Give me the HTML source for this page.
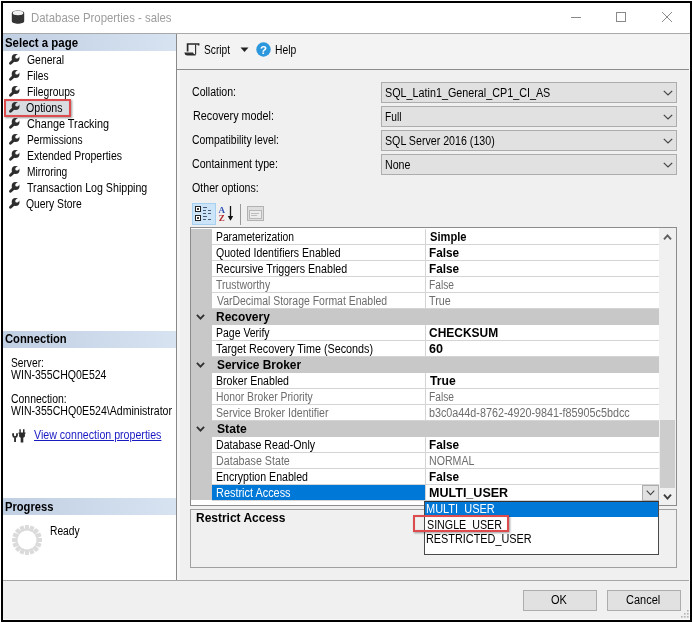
<!DOCTYPE html>
<html><head><meta charset="utf-8"><title>Database Properties - sales</title>
<style>
html,body{margin:0;padding:0;}
body{width:692px;height:622px;background:#fff;position:relative;overflow:hidden;font-family:"Liberation Sans",sans-serif;font-size:12px;color:#000;}
.abs,.t,div,svg{position:absolute;}
.t{white-space:nowrap;line-height:16px;transform-origin:0 50%;display:block;}
.b{font-weight:bold;}
.g{color:#6d6d6d;}
#frame{left:1px;top:1px;width:687px;height:617px;border:2px solid #000;background:#f0f0f0;}
#title{left:3px;top:3px;width:687px;height:30px;background:#fff;border-bottom:1px solid #a9a9a9;}
#left{left:3px;top:34px;width:173px;height:546px;background:#fff;border-right:1px solid #8a8a8a;}
.hdr{left:3px;width:173px;height:17px;background:linear-gradient(90deg,#c1cfe3 0%,#ccd9ea 50%,#d7e3f1 100%);}
.combo{left:381px;width:294px;height:19px;border:1px solid #adadad;background:#e1e1e1;}
.btn{top:590px;width:72px;height:19px;border:1px solid #adadad;background:#e1e1e1;}
.row{left:212px;width:447px;height:15px;border-bottom:1px solid #d4d4d4;background:#fff;}
.cat{left:191px;width:468px;height:16px;background:#c8c8c8;}
#root{left:0;top:0;width:692px;height:622px;will-change:transform;}
</style></head><body>
<div id="root">
<div id="frame"></div>
<div id="title"></div>

<svg style="left:11px;top:9px" width="14" height="16" viewBox="0 0 14 16"><path d="M0.8 4 C0.8 0.6 13.2 0.6 13.2 4 V12 C13.2 15.6 0.8 15.6 0.8 12 Z" fill="#343434"/><ellipse cx="7" cy="4" rx="5.3" ry="2.2" fill="#f2f2f2"/></svg>
<span class="t " style="left:30.91px;top:10.16px;font-size:12.8px;transform:scaleX(0.8901);color:#9d9d9d;">Database Properties - sales</span>
<svg style="left:566px;top:8px" width="112" height="20" viewBox="0 0 112 20" fill="none" stroke="#8a8a8a" stroke-width="1"><path d="M5 9.5 H15"/><rect x="50.5" y="4.5" width="9" height="9"/><path d="M96 4 L106 14 M106 4 L96 14"/></svg>
<div id="left"></div>
<div class="hdr" style="top:34px"></div>
<span class="t b" style="left:5.04px;top:34.57px;font-size:12.5px;transform:scaleX(0.9139);">Select a page</span>
<svg style="left:8.4px;top:53.6px" width="13" height="12" viewBox="0 0 13 12"><path d="M2.5 9.2 L6.6 5.4" stroke="#2e2e2e" stroke-width="2.9" stroke-linecap="round" fill="none"/><circle cx="7.6" cy="4" r="3.9" fill="#2e2e2e"/><circle cx="8.9" cy="2.9" r="1.7" fill="#fff"/><path d="M8.9 2.9 L13 -0.6" stroke="#fff" stroke-width="3" fill="none"/></svg>
<span class="t " style="left:26.67px;top:52.14px;font-size:12px;transform:scaleX(0.8675);">General</span>
<svg style="left:8.4px;top:69.6px" width="13" height="12" viewBox="0 0 13 12"><path d="M2.5 9.2 L6.6 5.4" stroke="#2e2e2e" stroke-width="2.9" stroke-linecap="round" fill="none"/><circle cx="7.6" cy="4" r="3.9" fill="#2e2e2e"/><circle cx="8.9" cy="2.9" r="1.7" fill="#fff"/><path d="M8.9 2.9 L13 -0.6" stroke="#fff" stroke-width="3" fill="none"/></svg>
<span class="t " style="left:26.65px;top:68.14px;font-size:12px;transform:scaleX(0.85);">Files</span>
<svg style="left:8.4px;top:85.6px" width="13" height="12" viewBox="0 0 13 12"><path d="M2.5 9.2 L6.6 5.4" stroke="#2e2e2e" stroke-width="2.9" stroke-linecap="round" fill="none"/><circle cx="7.6" cy="4" r="3.9" fill="#2e2e2e"/><circle cx="8.9" cy="2.9" r="1.7" fill="#fff"/><path d="M8.9 2.9 L13 -0.6" stroke="#fff" stroke-width="3" fill="none"/></svg>
<span class="t " style="left:26.64px;top:84.14px;font-size:12px;transform:scaleX(0.8569);">Filegroups</span>
<div style="left:6px;top:101px;width:63px;height:14px;background:#d9dde2;"></div>
<svg style="left:8.4px;top:101.6px" width="13" height="12" viewBox="0 0 13 12"><path d="M2.5 9.2 L6.6 5.4" stroke="#2e2e2e" stroke-width="2.9" stroke-linecap="round" fill="none"/><circle cx="7.6" cy="4" r="3.9" fill="#2e2e2e"/><circle cx="8.9" cy="2.9" r="1.7" fill="#d9dde2"/><path d="M8.9 2.9 L13 -0.6" stroke="#d9dde2" stroke-width="3" fill="none"/></svg>
<span class="t " style="left:26.26px;top:100.14px;font-size:12px;transform:scaleX(0.884);">Options</span>
<svg style="left:8.4px;top:117.6px" width="13" height="12" viewBox="0 0 13 12"><path d="M2.5 9.2 L6.6 5.4" stroke="#2e2e2e" stroke-width="2.9" stroke-linecap="round" fill="none"/><circle cx="7.6" cy="4" r="3.9" fill="#2e2e2e"/><circle cx="8.9" cy="2.9" r="1.7" fill="#fff"/><path d="M8.9 2.9 L13 -0.6" stroke="#fff" stroke-width="3" fill="none"/></svg>
<span class="t " style="left:26.65px;top:116.14px;font-size:12px;transform:scaleX(0.9039);">Change Tracking</span>
<svg style="left:8.4px;top:133.6px" width="13" height="12" viewBox="0 0 13 12"><path d="M2.5 9.2 L6.6 5.4" stroke="#2e2e2e" stroke-width="2.9" stroke-linecap="round" fill="none"/><circle cx="7.6" cy="4" r="3.9" fill="#2e2e2e"/><circle cx="8.9" cy="2.9" r="1.7" fill="#fff"/><path d="M8.9 2.9 L13 -0.6" stroke="#fff" stroke-width="3" fill="none"/></svg>
<span class="t " style="left:26.65px;top:132.14px;font-size:12px;transform:scaleX(0.85);">Permissions</span>
<svg style="left:8.4px;top:149.6px" width="13" height="12" viewBox="0 0 13 12"><path d="M2.5 9.2 L6.6 5.4" stroke="#2e2e2e" stroke-width="2.9" stroke-linecap="round" fill="none"/><circle cx="7.6" cy="4" r="3.9" fill="#2e2e2e"/><circle cx="8.9" cy="2.9" r="1.7" fill="#fff"/><path d="M8.9 2.9 L13 -0.6" stroke="#fff" stroke-width="3" fill="none"/></svg>
<span class="t " style="left:26.63px;top:148.14px;font-size:12px;transform:scaleX(0.8737);">Extended Properties</span>
<svg style="left:8.4px;top:165.6px" width="13" height="12" viewBox="0 0 13 12"><path d="M2.5 9.2 L6.6 5.4" stroke="#2e2e2e" stroke-width="2.9" stroke-linecap="round" fill="none"/><circle cx="7.6" cy="4" r="3.9" fill="#2e2e2e"/><circle cx="8.9" cy="2.9" r="1.7" fill="#fff"/><path d="M8.9 2.9 L13 -0.6" stroke="#fff" stroke-width="3" fill="none"/></svg>
<span class="t " style="left:26.65px;top:164.14px;font-size:12px;transform:scaleX(0.85);">Mirroring</span>
<svg style="left:8.4px;top:181.6px" width="13" height="12" viewBox="0 0 13 12"><path d="M2.5 9.2 L6.6 5.4" stroke="#2e2e2e" stroke-width="2.9" stroke-linecap="round" fill="none"/><circle cx="7.6" cy="4" r="3.9" fill="#2e2e2e"/><circle cx="8.9" cy="2.9" r="1.7" fill="#fff"/><path d="M8.9 2.9 L13 -0.6" stroke="#fff" stroke-width="3" fill="none"/></svg>
<span class="t " style="left:27.28px;top:180.14px;font-size:12px;transform:scaleX(0.8868);">Transaction Log Shipping</span>
<svg style="left:8.4px;top:197.6px" width="13" height="12" viewBox="0 0 13 12"><path d="M2.5 9.2 L6.6 5.4" stroke="#2e2e2e" stroke-width="2.9" stroke-linecap="round" fill="none"/><circle cx="7.6" cy="4" r="3.9" fill="#2e2e2e"/><circle cx="8.9" cy="2.9" r="1.7" fill="#fff"/><path d="M8.9 2.9 L13 -0.6" stroke="#fff" stroke-width="3" fill="none"/></svg>
<span class="t " style="left:26.27px;top:196.14px;font-size:12px;transform:scaleX(0.8627);">Query Store</span>
<div style="left:4px;top:99px;width:63px;height:14px;border:2px solid #dd4b4e;box-shadow:1px 1px 2px rgba(0,0,0,.4), inset 0 0 1px rgba(120,0,0,.3);"></div>
<div class="hdr" style="top:331px"></div>
<span class="t b" style="left:5.25px;top:330.87px;font-size:12.5px;transform:scaleX(0.8978);">Connection</span>
<span class="t " style="left:11.17px;top:354.84px;font-size:12px;transform:scaleX(0.85);">Server:</span>
<span class="t " style="left:11.4px;top:367.44px;font-size:12px;transform:scaleX(0.8783);">WIN-355CHQ0E524</span>
<span class="t " style="left:11.17px;top:390.84px;font-size:12px;transform:scaleX(0.8688);">Connection:</span>
<span class="t " style="left:11.4px;top:403.34px;font-size:12px;transform:scaleX(0.8811);">WIN-355CHQ0E524\Administrator</span>
<svg style="left:12px;top:429px" width="14" height="14" viewBox="0 0 14 14"><path d="M1.1 4.2 V6.2 C1.1 7.6 2 8 3.05 8.2 V13 M5 4.2 V6.2 C5 7.6 4.1 8 3.05 8.2" stroke="#2a2a2a" stroke-width="1.8" fill="none"/><path d="M7.3 0.2 h1.5 v3.4 h2.2 v-3.4 h1.5 v3.4 h1 v1.2 h-0.6 v2.2 c0 0.9 -0.7 1.5 -1.6 1.5 v4.9 h-2.6 v-4.9 c-0.9 0 -1.6 -0.6 -1.6 -1.5 v-2.2 h-0.6 v-1.2 h1 z" fill="#2a2a2a"/></svg>
<span class="t " style="left:34.2px;top:427.14px;font-size:12px;transform:scaleX(0.8857);color:#1a1ac4;text-decoration:underline;">View connection properties</span>
<div class="hdr" style="top:498px"></div>
<span class="t b" style="left:5.03px;top:498.87px;font-size:12.5px;transform:scaleX(0.8925);">Progress</span>
<svg style="left:10.8px;top:524.1px" width="32" height="32" viewBox="-16 -16 32 32" fill="#dbdbdb"><rect x="-2.1" y="-15" width="4.2" height="5.7" rx="0.8" transform="rotate(0.0)"/><rect x="-2.1" y="-15" width="4.2" height="5.7" rx="0.8" transform="rotate(22.5)"/><rect x="-2.1" y="-15" width="4.2" height="5.7" rx="0.8" transform="rotate(45.0)"/><rect x="-2.1" y="-15" width="4.2" height="5.7" rx="0.8" transform="rotate(67.5)"/><rect x="-2.1" y="-15" width="4.2" height="5.7" rx="0.8" transform="rotate(90.0)"/><rect x="-2.1" y="-15" width="4.2" height="5.7" rx="0.8" transform="rotate(112.5)"/><rect x="-2.1" y="-15" width="4.2" height="5.7" rx="0.8" transform="rotate(135.0)"/><rect x="-2.1" y="-15" width="4.2" height="5.7" rx="0.8" transform="rotate(157.5)"/><rect x="-2.1" y="-15" width="4.2" height="5.7" rx="0.8" transform="rotate(180.0)"/><rect x="-2.1" y="-15" width="4.2" height="5.7" rx="0.8" transform="rotate(202.5)"/><rect x="-2.1" y="-15" width="4.2" height="5.7" rx="0.8" transform="rotate(225.0)"/><rect x="-2.1" y="-15" width="4.2" height="5.7" rx="0.8" transform="rotate(247.5)"/><rect x="-2.1" y="-15" width="4.2" height="5.7" rx="0.8" transform="rotate(270.0)"/><rect x="-2.1" y="-15" width="4.2" height="5.7" rx="0.8" transform="rotate(292.5)"/><rect x="-2.1" y="-15" width="4.2" height="5.7" rx="0.8" transform="rotate(315.0)"/><rect x="-2.1" y="-15" width="4.2" height="5.7" rx="0.8" transform="rotate(337.5)"/></svg>
<span class="t " style="left:49.95px;top:522.54px;font-size:12px;transform:scaleX(0.8533);">Ready</span>
<div style="left:177px;top:34px;width:3px;height:546px;background:#f6f6f6;"></div>
<div style="left:177px;top:34px;width:513px;height:35px;background:#f3f3f3;"></div>
<div style="left:177px;top:69px;width:513px;height:1px;background:#8c8c8c;"></div>
<svg style="left:184px;top:42px" width="16" height="15" viewBox="0 0 16 15" fill="none" stroke="#2a2a2a"><path d="M3.6 9.6 V2 H14.6 V3.6" stroke-width="1.7"/><path d="M11.6 2.4 V12.6" stroke-width="1.1"/><path d="M1.2 11.2 H8.6 C8.9 12.4 9.6 13 11.6 12.9 H3.4 C2 12.9 1.4 12.2 1.2 11.2 Z" stroke-width="1.3" fill="#2a2a2a"/></svg>
<span class="t " style="left:204.38px;top:42.14px;font-size:12px;transform:scaleX(0.85);">Script</span>
<svg style="left:240px;top:47px" width="9" height="6" viewBox="0 0 9 6"><path d="M0.5 0.5 H8.5 L4.5 5 Z" fill="#222"/></svg>
<svg style="left:255.7px;top:42.4px" width="15" height="15" viewBox="0 0 15 15"><circle cx="7.5" cy="7.5" r="7.2" fill="#2b97dc"/><text x="7.5" y="11.6" font-family="Liberation Sans, sans-serif" font-weight="bold" font-size="11.5" fill="#fff" text-anchor="middle">?</text></svg>
<span class="t " style="left:274.94px;top:42.14px;font-size:12px;transform:scaleX(0.8602);">Help</span>
<span class="t " style="left:192.46px;top:84.34px;font-size:12px;transform:scaleX(0.8804);">Collation:</span>
<div class="combo" style="top:82px"></div>
<span class="t " style="left:385.05px;top:84.64px;font-size:12px;transform:scaleX(0.8977);">SQL_Latin1_General_CP1_CI_AS</span>
<svg style="left:663px;top:90px" width="10" height="6" viewBox="0 0 10 6" fill="none" stroke="#444" stroke-width="1.2"><path d="M0.8 0.8 L5 5 L9.2 0.8"/></svg>
<span class="t " style="left:192.6px;top:108.34px;font-size:12px;transform:scaleX(0.8989);">Recovery model:</span>
<div class="combo" style="top:106px"></div>
<span class="t " style="left:384.95px;top:108.64px;font-size:12px;transform:scaleX(0.85);">Full</span>
<svg style="left:663px;top:114px" width="10" height="6" viewBox="0 0 10 6" fill="none" stroke="#444" stroke-width="1.2"><path d="M0.8 0.8 L5 5 L9.2 0.8"/></svg>
<span class="t " style="left:192.47px;top:132.34px;font-size:12px;transform:scaleX(0.869);">Compatibility level:</span>
<div class="combo" style="top:130px"></div>
<span class="t " style="left:385.06px;top:132.64px;font-size:12px;transform:scaleX(0.8873);">SQL Server 2016 (130)</span>
<svg style="left:663px;top:138px" width="10" height="6" viewBox="0 0 10 6" fill="none" stroke="#444" stroke-width="1.2"><path d="M0.8 0.8 L5 5 L9.2 0.8"/></svg>
<span class="t " style="left:192.46px;top:156.34px;font-size:12px;transform:scaleX(0.8825);">Containment type:</span>
<div class="combo" style="top:154px"></div>
<span class="t " style="left:384.91px;top:156.64px;font-size:12px;transform:scaleX(0.8881);">None</span>
<svg style="left:663px;top:162px" width="10" height="6" viewBox="0 0 10 6" fill="none" stroke="#444" stroke-width="1.2"><path d="M0.8 0.8 L5 5 L9.2 0.8"/></svg>
<span class="t " style="left:192.46px;top:180.34px;font-size:12px;transform:scaleX(0.8854);">Other options:</span>
<div style="left:192px;top:203px;width:22px;height:20px;background:#cce4f7;border:1px solid #a6d0f2;"></div>
<svg style="left:195px;top:206px" width="18" height="16" viewBox="0 0 18 16"><g fill="#fff" stroke="#222" stroke-width="1"><rect x="0.5" y="0.5" width="5" height="5"/><rect x="0.5" y="9.5" width="5" height="5"/></g><path d="M2 3 H4 M3 2 V4 M2 12 H4 M3 11 V13" stroke="#000" stroke-width="1"/><g stroke="#4a5a78" stroke-width="1"><path d="M8 1.5 H12 M8 4.5 H11 M13 4.5 H16 M8 7.5 H11 M13 7.5 H16"/><path d="M8 10.5 H12 M8 13.5 H11 M13 13.5 H16"/></g></svg>
<svg style="left:218px;top:204px" width="18" height="20" viewBox="0 0 18 20"><text x="0.5" y="8.5" font-family="Liberation Serif, serif" font-weight="bold" font-size="9" fill="#2b4fb3">A</text><text x="0.8" y="17" font-family="Liberation Serif, serif" font-weight="bold" font-size="9" fill="#b3262b">Z</text><path d="M12.5 2 V15" stroke="#111" stroke-width="1.3"/><path d="M9.8 12 L12.5 16.8 L15.2 12 Z" fill="#111"/></svg>
<div style="left:240px;top:204px;width:1px;height:21px;background:#9a9a9a;"></div>
<svg style="left:247px;top:206px" width="17" height="15" viewBox="0 0 17 15" fill="none"><rect x="0.5" y="0.5" width="16" height="14" fill="#dedede" stroke="#b2b2b2"/><rect x="2.5" y="4.5" width="12" height="8" fill="#ececec" stroke="#b8b8b8"/><path d="M4 7.5 H12 M4 9.5 H10" stroke="#bdbdbd"/></svg>
<div style="left:190px;top:227px;width:485px;height:277px;border:1px solid #8c8c8c;background:#fff;"></div>
<div style="left:191px;top:229px;width:21px;height:271px;background:#c8c8c8;"></div>
<div class="row" style="top:229px"></div>
<span class="t " style="left:215.74px;top:228.54px;font-size:12px;transform:scaleX(0.8596);">Parameterization</span>
<span class="t b" style="left:429.77px;top:228.54px;font-size:12px;transform:scaleX(0.9265);">Simple</span>
<div class="row" style="top:245px"></div>
<span class="t " style="left:216.16px;top:244.54px;font-size:12px;transform:scaleX(0.8773);">Quoted Identifiers Enabled</span>
<span class="t b" style="left:429.27px;top:244.54px;font-size:12px;transform:scaleX(0.9797);">False</span>
<div class="row" style="top:261px"></div>
<span class="t " style="left:215.71px;top:260.54px;font-size:12px;transform:scaleX(0.8899);">Recursive Triggers Enabled</span>
<span class="t b" style="left:429.27px;top:260.54px;font-size:12px;transform:scaleX(0.9797);">False</span>
<div class="row" style="top:277px"></div>
<span class="t g" style="left:216.38px;top:276.54px;font-size:12px;transform:scaleX(0.8694);">Trustworthy</span>
<span class="t g" style="left:429.15px;top:276.54px;font-size:12px;transform:scaleX(0.85);">False</span>
<div class="row" style="top:293px"></div>
<span class="t g" style="left:216.6px;top:292.54px;font-size:12px;transform:scaleX(0.8715);">VarDecimal Storage Format Enabled</span>
<span class="t g" style="left:429.38px;top:292.54px;font-size:12px;transform:scaleX(0.8936);">True</span>
<div class="cat" style="top:309px"></div>
<svg style="left:196px;top:314px" width="10" height="6" viewBox="0 0 10 6" fill="none" stroke="#333" stroke-width="1.9"><path d="M0.9 0.9 L4.5 4.6 L8.1 0.9"/></svg>
<span class="t b" style="left:216.05px;top:308.54px;font-size:12px;transform:scaleX(0.9953);">Recovery</span>
<div class="row" style="top:325px"></div>
<span class="t " style="left:215.73px;top:324.54px;font-size:12px;transform:scaleX(0.873);">Page Verify</span>
<span class="t b" style="left:428.8px;top:324.54px;font-size:12px;transform:scaleX(0.9971);">CHECKSUM</span>
<div class="row" style="top:341px"></div>
<span class="t " style="left:216.38px;top:340.54px;font-size:12px;transform:scaleX(0.899);">Target Recovery Time (Seconds)</span>
<span class="t b" style="left:429.48px;top:340.54px;font-size:12px;transform:scaleX(1.05);">60</span>
<div class="cat" style="top:357px"></div>
<svg style="left:196px;top:362px" width="10" height="6" viewBox="0 0 10 6" fill="none" stroke="#333" stroke-width="1.9"><path d="M0.9 0.9 L4.5 4.6 L8.1 0.9"/></svg>
<span class="t b" style="left:216.55px;top:356.54px;font-size:12px;transform:scaleX(0.9923);">Service Broker</span>
<div class="row" style="top:373px"></div>
<span class="t " style="left:215.72px;top:372.54px;font-size:12px;transform:scaleX(0.8827);">Broker Enabled</span>
<span class="t b" style="left:429.6px;top:372.54px;font-size:12px;transform:scaleX(1.012);">True</span>
<div class="row" style="top:389px"></div>
<span class="t g" style="left:215.74px;top:388.54px;font-size:12px;transform:scaleX(0.8631);">Honor Broker Priority</span>
<span class="t g" style="left:429.15px;top:388.54px;font-size:12px;transform:scaleX(0.85);">False</span>
<div class="row" style="top:405px"></div>
<span class="t g" style="left:216.16px;top:404.54px;font-size:12px;transform:scaleX(0.8784);">Service Broker Identifier</span>
<span class="t g" style="left:428.93px;top:404.54px;font-size:12px;transform:scaleX(0.898);">b3c0a44d-8762-4920-9841-f85905c5bdcc</span>
<div class="cat" style="top:421px"></div>
<svg style="left:196px;top:426px" width="10" height="6" viewBox="0 0 10 6" fill="none" stroke="#333" stroke-width="1.9"><path d="M0.9 0.9 L4.5 4.6 L8.1 0.9"/></svg>
<span class="t b" style="left:216.55px;top:420.54px;font-size:12px;transform:scaleX(1.0122);">State</span>
<div class="row" style="top:437px"></div>
<span class="t " style="left:215.72px;top:436.54px;font-size:12px;transform:scaleX(0.8838);">Database Read-Only</span>
<span class="t b" style="left:429.27px;top:436.54px;font-size:12px;transform:scaleX(0.9797);">False</span>
<div class="row" style="top:453px"></div>
<span class="t g" style="left:215.71px;top:452.54px;font-size:12px;transform:scaleX(0.8923);">Database State</span>
<span class="t g" style="left:429.12px;top:452.54px;font-size:12px;transform:scaleX(0.884);">NORMAL</span>
<div class="row" style="top:469px"></div>
<span class="t " style="left:215.72px;top:468.54px;font-size:12px;transform:scaleX(0.8841);">Encryption Enabled</span>
<span class="t b" style="left:429.27px;top:468.54px;font-size:12px;transform:scaleX(0.9797);">False</span>
<div class="row" style="top:485px"></div>
<div style="left:212px;top:485px;width:213px;height:15px;background:#0078d7;"></div>
<span class="t " style="left:215.69px;top:484.54px;font-size:12px;transform:scaleX(0.9093);color:#fff;">Restrict Access</span>
<span class="t b" style="left:429.22px;top:484.54px;font-size:12px;transform:scaleX(1.0448);">MULTI_USER</span>
<div style="left:425px;top:229px;width:1px;height:272px;background:#d4d4d4;"></div>
<div style="left:425px;top:309px;width:1px;height:16px;background:#c8c8c8;"></div>
<div style="left:425px;top:357px;width:1px;height:16px;background:#c8c8c8;"></div>
<div style="left:425px;top:421px;width:1px;height:16px;background:#c8c8c8;"></div>
<div style="left:659px;top:228px;width:17px;height:277px;background:#f0f0f0;"></div>
<div style="left:660px;top:420px;width:15px;height:68px;background:#cdcdcd;"></div>
<svg style="left:663px;top:233px" width="9" height="8" viewBox="0 0 9 8" fill="none" stroke="#5f5f5f" stroke-width="1.9"><path d="M1 6.4 L4.5 2.4 L8 6.4"/></svg>
<svg style="left:663px;top:492.8px" width="9" height="8" viewBox="0 0 9 8" fill="none" stroke="#404040" stroke-width="1.9"><path d="M1 1.6 L4.5 5.6 L8 1.6"/></svg>
<div style="left:642px;top:485px;width:15px;height:14px;border:1px solid #adadad;background:#e1e1e1;"></div>
<svg style="left:646px;top:490px" width="9" height="6" viewBox="0 0 9 6" fill="none" stroke="#444" stroke-width="1.1"><path d="M0.7 0.7 L4.5 4.6 L8.3 0.7"/></svg>
<div style="left:190px;top:509px;width:485px;height:57px;border:1px solid #a0a0a0;"></div>
<span class="t b" style="left:195.95px;top:509.84px;font-size:12px;transform:scaleX(0.9977);">Restrict Access</span>
<div style="left:424px;top:501px;width:233px;height:52px;border:1px solid #4a4a4a;border-top-color:#333;background:#fff;"></div>
<div style="left:425px;top:502px;width:233px;height:15px;background:#0078d7;"></div>
<span class="t " style="left:426.48px;top:501.14px;font-size:12px;transform:scaleX(0.915);color:#fff;height:14px;overflow:hidden;">MULTI_USER</span>
<span class="t " style="left:426.95px;top:517.04px;font-size:12px;transform:scaleX(0.8916);height:14px;overflow:hidden;">SINGLE_USER</span>
<span class="t " style="left:426.49px;top:530.84px;font-size:12px;transform:scaleX(0.9061);">RESTRICTED_USER</span>
<div style="left:413px;top:515px;width:92px;height:13px;border:2px solid #dd4b4e;box-shadow:1px 1px 2px rgba(0,0,0,.4), inset 0 0 1px rgba(120,0,0,.3);"></div>
<div style="left:3px;top:580px;width:687px;height:1px;background:#a6a6a6;"></div>
<div class="btn" style="left:523px"></div>
<div class="btn" style="left:607px"></div>
<span class="t " style="left:550.84px;top:592.24px;font-size:12px;transform:scaleX(0.915);">OK</span>
<span class="t " style="left:625.74px;top:592.24px;font-size:12px;transform:scaleX(0.915);">Cancel</span>
<svg style="left:680.5px;top:610.2px" width="9" height="9" viewBox="0 0 9 9" fill="#b4b4b4"><rect x="6" y="0" width="1.6" height="1.6"/><rect x="3" y="3" width="1.6" height="1.6"/><rect x="6" y="3" width="1.6" height="1.6"/><rect x="0" y="6" width="1.6" height="1.6"/><rect x="3" y="6" width="1.6" height="1.6"/><rect x="6" y="6" width="1.6" height="1.6"/></svg>
<div style="left:3px;top:619px;width:687px;height:1px;background:#fafafa;"></div><div style="left:689px;top:34px;width:1px;height:586px;background:#f8f8f8;"></div>
</div>
</body></html>
